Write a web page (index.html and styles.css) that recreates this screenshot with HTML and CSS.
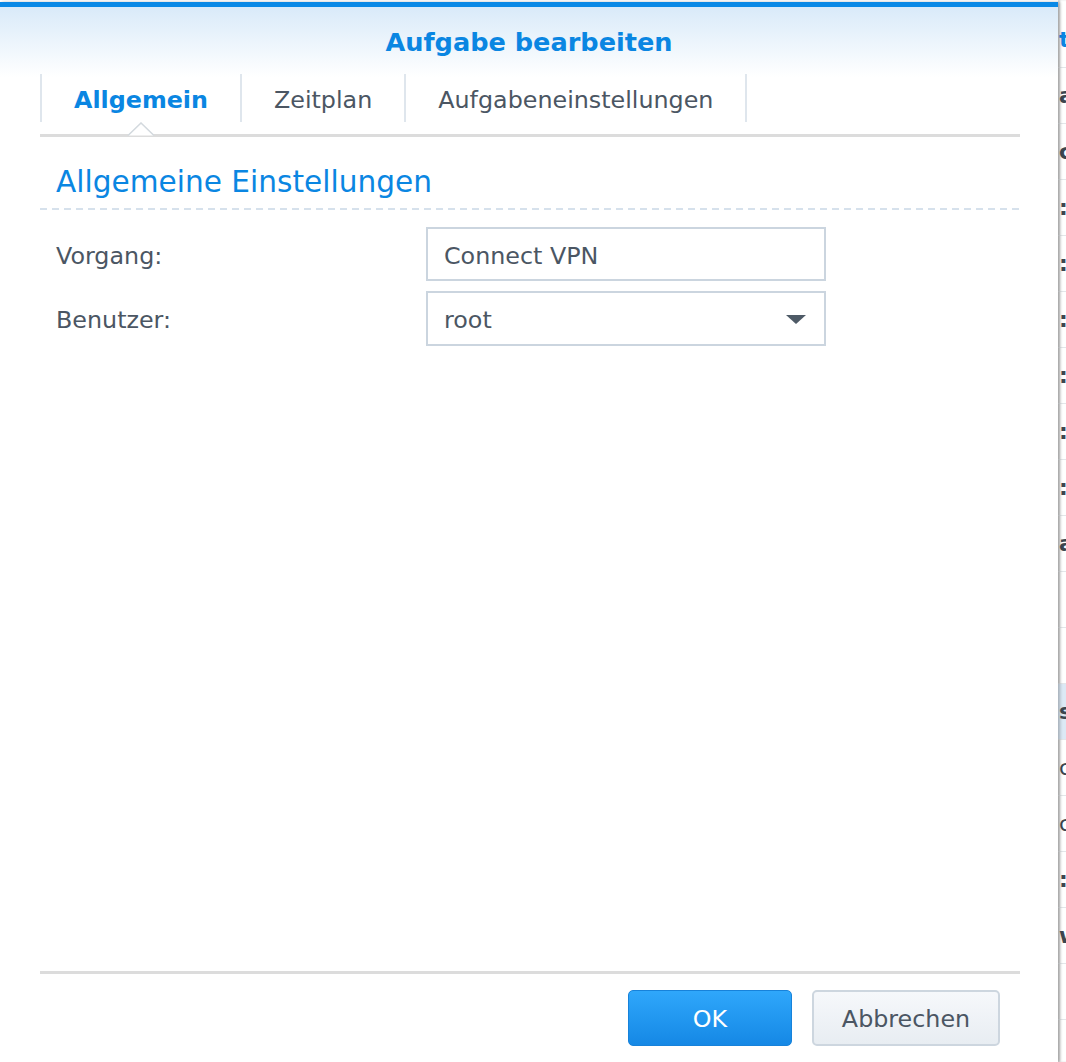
FILE: index.html
```html
<!DOCTYPE html>
<html>
<head>
  <link rel="stylesheet" href="styles.css">
</head>
<body>
  <div class="dialog">
    <div class="dialog-header">Aufgabe bearbeiten</div>

    <!-- tabs -->
    <div class="tabs">
      <div class="tab active">Allgemein</div>
      <div class="tab">Zeitplan</div>
      <div class="tab last">Aufgabeneinstellungen</div>
      <svg class="tab-notch" width="28" height="14" viewBox="0 0 28 14">
        <polyline points="1,13.5 14,1 27,13.5" fill="#fff" stroke="#d3d9de" stroke-width="1.5"/>
      </svg>
    </div>

    <!-- form -->
    <div class="dialog-body">
      <h2 class="section-title">Allgemeine Einstellungen</h2>
      <div class="dashed"></div>

      <div class="form-row">
        <label class="form-label">Vorgang:</label>
        <div class="field">Connect VPN</div>
      </div>
      <div class="form-row">
        <label class="form-label">Benutzer:</label>
        <div class="field select">
          <span>root</span>
          <span class="arrow"></span>
        </div>
      </div>
    </div>

    <div class="dialog-footer">
      <button class="btn btn-ok">OK</button>
      <button class="btn btn-cancel">Abbrechen</button>
    </div>
  </div>

  <!-- window behind the dialog -->
  <div class="backdrop">
    <div class="bg-row head">ta</div>
    <div class="bg-row">at</div>
    <div class="bg-row">ce</div>
    <div class="bg-row">:h</div>
    <div class="bg-row">:h</div>
    <div class="bg-row">:h</div>
    <div class="bg-row">:h</div>
    <div class="bg-row">:h</div>
    <div class="bg-row">:h</div>
    <div class="bg-row">at</div>
    <div class="bg-row"></div>
    <div class="bg-row"></div>
    <div class="bg-row selected">s:</div>
    <div class="bg-row light">co</div>
    <div class="bg-row light">co</div>
    <div class="bg-row">:h</div>
    <div class="bg-row">w</div>
    <div class="bg-row"></div>
  </div>
</body>
</html>
```

FILE: styles.css
```css
body {
  margin: 0;
  background-color: white;
  font-family: "DejaVu Sans", Verdana, sans-serif;
  color: #4b5663;
  display: flex;
  height: 1062px;
  overflow: hidden;
}

.dialog {
  width: 1058px;
  margin-top: 2px;
  border-top: 5px solid #0a89e6;
  display: flex;
  flex-direction: column;
  background: linear-gradient(#d9eaf9 0px, #ffffff 70px);
  position: relative;
  z-index: 1;
  box-shadow: 2px 0 3px rgba(0, 0, 0, 0.25);
}

.dialog-header {
  height: 67px;
  padding-top: 2px;
  box-sizing: border-box;
  display: flex;
  align-items: center;
  justify-content: center;
  color: #0a86e2;
  font-weight: bold;
  font-size: 25.6px;
}

/* tabs */
.tabs {
  margin: 0 38px 0 40px;
  height: 60px;
  display: flex;
  align-items: flex-start;
  border-bottom: 3px solid #dcdcdc;
  position: relative;
}

.tab {
  height: 48px;
  box-sizing: border-box;
  padding: 3px 32px 0;
  display: flex;
  align-items: center;
  border-left: 2px solid #dfe6ed;
  font-size: 23.8px;
  color: #4b5663;
}

.tab.last {
  border-right: 2px solid #dfe6ed;
}

.tab.active {
  color: #0a86e2;
  font-weight: bold;
}

.tab-notch {
  position: absolute;
  left: 87px;
  bottom: -2px;
}

/* body */
.dialog-body {
  flex: 1;
  padding: 0 38px 0 40px;
}

.section-title {
  margin: 0;
  padding: 28px 0 0 16px;
  height: 43px;
  font-size: 29.6px;
  font-weight: normal;
  color: #0a86e2;
}

.dashed {
  height: 2px;
  background: repeating-linear-gradient(90deg, #d6e1ec 0 7px, transparent 7px 12px);
}

.form-row {
  display: flex;
  align-items: center;
  margin-top: 17px;
}

.form-row + .form-row {
  margin-top: 10px;
}

.form-label {
  width: 386px;
  padding: 3px 0 0 16px;
  box-sizing: border-box;
  font-size: 23.8px;
}

.field {
  width: 400px;
  height: 54px;
  box-sizing: border-box;
  border: 2px solid #cbd5df;
  background-color: #fff;
  padding: 4px 16px 0;
  display: flex;
  align-items: center;
  font-size: 23.8px;
  color: #4b5663;
}

.select {
  justify-content: space-between;
  height: 55px;
  padding-top: 2px;
}

.arrow {
  width: 0;
  height: 0;
  border-left: 10px solid transparent;
  border-right: 10px solid transparent;
  border-top: 9px solid #4e5a66;
  margin-right: 2px;
}

/* footer */
.dialog-footer {
  margin: 0 38px 16px 40px;
  border-top: 3px solid #dcdcdc;
  padding: 16px 20px 0 0;
  display: flex;
  justify-content: flex-end;
  gap: 20px;
}

.btn {
  height: 56px;
  padding-top: 3px;
  border-radius: 5px;
  font-family: "DejaVu Sans", Verdana, sans-serif;
  font-size: 23.8px;
  cursor: pointer;
}

.btn-ok {
  width: 164px;
  color: #fff;
  border: 1px solid #1782da;
  background: linear-gradient(#2fa7fb, #1588e5);
}

.btn-cancel {
  width: 188px;
  color: #4b5663;
  border: 2px solid #cdd6df;
  background: linear-gradient(#f6f8fb, #e8edf2);
}

/* background window strip */
.backdrop {
  flex: 1;
  overflow: hidden;
  background-color: #fff;
  padding-top: 12px;
  box-shadow: inset 2px 0 2px rgba(0, 0, 0, 0.15);
}

.bg-row {
  height: 55px;
  border-bottom: 1px solid #e3e6e9;
  display: flex;
  align-items: center;
  padding-left: 1px;
  font-size: 22px;
  font-weight: bold;
  color: #3c4650;
  white-space: nowrap;
}

.bg-row.head {
  color: #0a86e2;
}

.bg-row.selected {
  background-color: #dce9f5;
}

.bg-row.light {
  font-weight: normal;
}
```
